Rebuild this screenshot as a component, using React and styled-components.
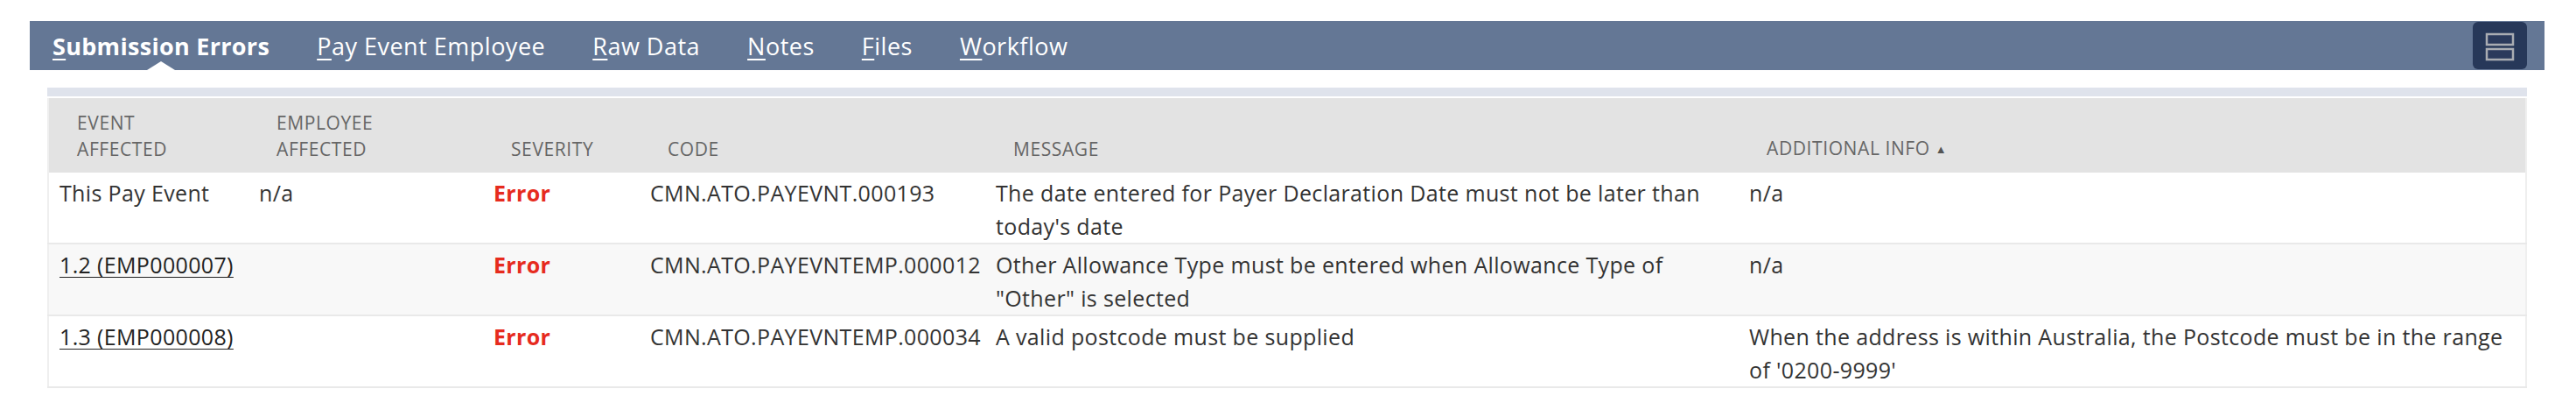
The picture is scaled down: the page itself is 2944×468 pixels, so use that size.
import styled, { createGlobalStyle } from 'styled-components';

const GlobalStyle = createGlobalStyle`
  body {
    margin: 0;
    background: #fff;
    font-family: "Open Sans", "Liberation Sans", sans-serif;
  }
`;

const tabs = [
  { key: 'S', rest: 'ubmission Errors', active: true },
  { key: 'P', rest: 'ay Event Employee' },
  { key: 'R', rest: 'aw Data' },
  { key: 'N', rest: 'otes' },
  { key: 'F', rest: 'iles' },
  { key: 'W', rest: 'orkflow' },
];

const columns = [
  { label: ['EVENT', 'AFFECTED'], width: 229 },
  { label: ['EMPLOYEE', 'AFFECTED'], width: 268 },
  { label: ['SEVERITY'], width: 179 },
  { label: ['CODE'], width: 395 },
  { label: ['MESSAGE'], width: 861 },
  { label: ['ADDITIONAL INFO'], sorted: true },
];

const rows = [
  {
    event: 'This Pay Event',
    employee: 'n/a',
    code: 'CMN.ATO.PAYEVNT.000193',
    message: "The date entered for Payer Declaration Date must not be later than today's date",
    info: 'n/a',
  },
  {
    event: '1.2 (EMP000007)',
    link: true,
    employee: '',
    code: 'CMN.ATO.PAYEVNTEMP.000012',
    message: 'Other Allowance Type must be entered when Allowance Type of "Other" is selected',
    info: 'n/a',
  },
  {
    event: '1.3 (EMP000008)',
    link: true,
    employee: '',
    code: 'CMN.ATO.PAYEVNTEMP.000034',
    message: 'A valid postcode must be supplied',
    info: "When the address is within Australia, the Postcode must be in the range of '0200-9999'",
  },
];

function App() {
  return (
    <Page>
      <GlobalStyle />
      <TabBar>
        <TabList>
          {tabs.map((t) => (
            <Tab key={t.key} $active={t.active}>
              <AccessKey>{t.key}</AccessKey>{t.rest}
            </Tab>
          ))}
        </TabList>
        <LayoutButton aria-label="layout">
          <svg width="36" height="36" viewBox="0 0 36 36">
            <rect x="3" y="5" width="30" height="12" fill="#2b3a5c" stroke="#a9acb2" strokeWidth="2.5" />
            <rect x="3" y="22" width="30" height="12" fill="#2b3a5c" stroke="#a9acb2" strokeWidth="2.5" />
          </svg>
        </LayoutButton>
      </TabBar>

      <TableWrap>
        <ErrorTable>
          <colgroup>
            {columns.map((c, i) => (
              <col key={i} style={c.width ? { width: c.width } : undefined} />
            ))}
          </colgroup>
          <thead>
            <tr>
              {columns.map((c, i) => (
                <HeadCell key={i}>
                  {c.label.map((l, j) => (
                    <div key={j}>
                      {l}
                      {c.sorted && <SortArrow>▲</SortArrow>}
                    </div>
                  ))}
                </HeadCell>
              ))}
            </tr>
          </thead>
          <tbody>
            {rows.map((r, i) => (
              <Row key={i} $alt={i % 2 === 1}>
                <Cell>{r.link ? <RecordLink>{r.event}</RecordLink> : r.event}</Cell>
                <Cell>{r.employee}</Cell>
                <Cell><Severity>Error</Severity></Cell>
                <Cell>{r.code}</Cell>
                <Cell>{r.message}</Cell>
                <Cell>{r.info}</Cell>
              </Row>
            ))}
          </tbody>
        </ErrorTable>
      </TableWrap>
    </Page>
  );
}

export default App;

const Page = styled.div`
  padding: 24px 36px 0 34px;
`;

const TabBar = styled.div`
  display: flex;
  align-items: center;
  justify-content: space-between;
  height: 56px;
  background: #647795;
  padding: 0 20px 0 26px;
`;

const TabList = styled.div`
  display: flex;
  align-items: stretch;
  height: 100%;
  gap: 54px;
`;

const Tab = styled.div`
  position: relative;
  display: flex;
  align-items: center;
  color: #fff;
  font-size: 27px;
  letter-spacing: ${(p) => (p.$active ? '0.3px' : '0.5px')};
  font-weight: ${(p) => (p.$active ? 700 : 400)};
  white-space: nowrap;

  &::after {
    content: '';
    display: ${(p) => (p.$active ? 'block' : 'none')};
    position: absolute;
    left: 50%;
    bottom: 0;
    transform: translateX(-50%);
    border-left: 16px solid transparent;
    border-right: 16px solid transparent;
    border-bottom: 10px solid #fff;
  }
`;

const AccessKey = styled.span`
  text-decoration: underline;
  text-decoration-thickness: 2px;
  text-underline-offset: 4px;
`;

const LayoutButton = styled.div`
  display: flex;
  align-items: center;
  justify-content: center;
  width: 62px;
  height: 54px;
  border-radius: 6px;
  background: #273859;
`;

const TableWrap = styled.div`
  margin: 20px 20px 0 20px;
  border-top: 10px solid #dfe3ec;
  padding-top: 2px;
`;

const ErrorTable = styled.table`
  width: 100%;
  table-layout: fixed;
  border-collapse: collapse;
  border-left: 2px solid #efefef;
  border-right: 2px solid #efefef;
`;

const HeadCell = styled.th`
  background: #e3e3e3;
  color: #666;
  font-size: 21px;
  letter-spacing: 0.6px;
  font-weight: 400;
  line-height: 30px;
  text-align: left;
  vertical-align: bottom;
  padding: 13px 12px 12px 32px;
  height: 85px;
  box-sizing: border-box;
`;

const SortArrow = styled.span`
  font-size: 13px;
  margin-left: 6px;
  vertical-align: 2px;
  color: #555;
`;

const Row = styled.tr`
  background: ${(p) => (p.$alt ? '#f8f8f8' : '#fff')};
  border-bottom: 2px solid #e9e9e9;
`;

const Cell = styled.td`
  color: #333;
  font-size: 25px;
  letter-spacing: 0.35px;
  line-height: 38px;
  vertical-align: top;
  padding: 4px 6px 0 12px;
  height: 76px;
`;

const Severity = styled.span`
  color: #e62b1e;
  font-weight: 700;
`;

const RecordLink = styled.a`
  color: #222;
  text-decoration: underline;
  text-decoration-thickness: 1px;
  text-underline-offset: 4px;
  cursor: pointer;
`;
